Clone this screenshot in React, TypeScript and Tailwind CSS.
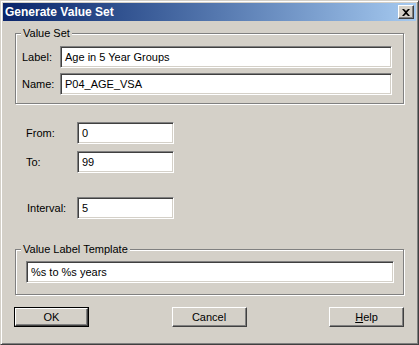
import React from 'react';

const sunken =
  'border border-t-[#808080] border-l-[#808080] border-b-white border-r-white shadow-[inset_1px_1px_0_#404040,inset_-1px_-1px_0_#d4d0c8] bg-white';

const raised =
  'border border-t-white border-l-white border-b-[#404040] border-r-[#404040] shadow-[inset_-1px_-1px_0_#808080] bg-[#d4d0c8]';

const TextBox: React.FC<{ value: string; className?: string }> = ({ value, className }) => (
  <div className={`${sunken} h-[22px] flex items-center pl-[4px] text-[11px] text-black ${className ?? ''}`}>
    {value}
  </div>
);

const GroupBox: React.FC<{ title: string; className?: string; children: React.ReactNode }> = ({
  title,
  className,
  children,
}) => (
  <div
    className={`relative border border-[#808080] shadow-[inset_1px_1px_0_#fff,1px_1px_0_#fff] ${className ?? ''}`}
  >
    {/* caption sits over the etched line */}
    <span className="absolute top-[-7px] left-[5px] px-[2px] bg-[#d4d0c8] text-[11px] leading-[13px] text-black">
      {title}
    </span>
    {children}
  </div>
);

const Button: React.FC<{ children: React.ReactNode; isDefault?: boolean }> = ({ children, isDefault }) => {
  if (isDefault) {
    return (
      <div className="border border-black w-[75px] h-[20px] flex">
        <div className={`${raised} flex-1 flex items-center justify-center text-[11px] text-black`}>{children}</div>
      </div>
    );
  }
  return (
    <div className={`${raised} w-[75px] h-[20px] flex items-center justify-center text-[11px] text-black`}>
      {children}
    </div>
  );
};

export default function App() {
  return (
    <div
      className="w-[419px] h-[345px] bg-[#d4d0c8] border border-t-[#d4d0c8] border-l-[#d4d0c8] border-b-[#404040] border-r-[#404040] shadow-[inset_1px_1px_0_#fff,inset_-1px_-1px_0_#808080] p-[2px] flex flex-col"
      style={{ fontFamily: '"Liberation Sans", Arial, sans-serif' }}
    >
      {/* Title bar */}
      <div className="h-[18px] flex items-center justify-between bg-gradient-to-r from-[#0a246a] to-[#a6caf0] pl-[2px] pr-[2px]">
        <span className="text-white font-bold text-[12px] leading-none">Generate Value Set</span>
        <div className={`${raised} w-[16px] h-[14px] flex items-center justify-center`}>
          <svg width="8" height="7" viewBox="0 0 8 7">
            <path d="M0 0h2l2 2 2-2h2L5 3.5 8 7H6L4 5 2 7H0l3-3.5z" fill="#000" />
          </svg>
        </div>
      </div>

      <div className="flex flex-col px-[12px]">
        <GroupBox title="Value Set" className="mt-[12px] pt-[12px] pb-[8px] pl-[6px] pr-[11px]">
          <div className="flex flex-col gap-[5px]">
            <div className="flex items-center">
              <span className="w-[38px] text-[11px] text-black">Label:</span>
              <TextBox value="Age in 5 Year Groups" className="flex-1" />
            </div>
            <div className="flex items-center">
              <span className="w-[38px] text-[11px] text-black">Name:</span>
              <TextBox value="P04_AGE_VSA" className="flex-1" />
            </div>
          </div>
        </GroupBox>

        <div className="flex flex-col pl-[11px] mt-[18px]">
          <div className="flex items-center">
            <span className="w-[51px] text-[11px] text-black">From:</span>
            <TextBox value="0" className="w-[97px]" />
          </div>
          <div className="flex items-center mt-[7px]">
            <span className="w-[51px] text-[11px] text-black">To:</span>
            <TextBox value="99" className="w-[97px]" />
          </div>
          <div className="flex items-center mt-[24px]">
            <span className="w-[51px] pl-[1px] text-[11px] text-black">Interval:</span>
            <TextBox value="5" className="w-[97px]" />
          </div>
        </div>

        <GroupBox title="Value Label Template" className="mt-[30px] pt-[11px] pb-[11px] pl-[10px] pr-[9px]">
          <TextBox value="%s to %s years" />
        </GroupBox>

        <div className="flex justify-between mt-[12px] -ml-[1px]">
          <Button isDefault>OK</Button>
          <Button>Cancel</Button>
          <Button>
            <span className="underline">H</span>elp
          </Button>
        </div>
      </div>
    </div>
  );
}
